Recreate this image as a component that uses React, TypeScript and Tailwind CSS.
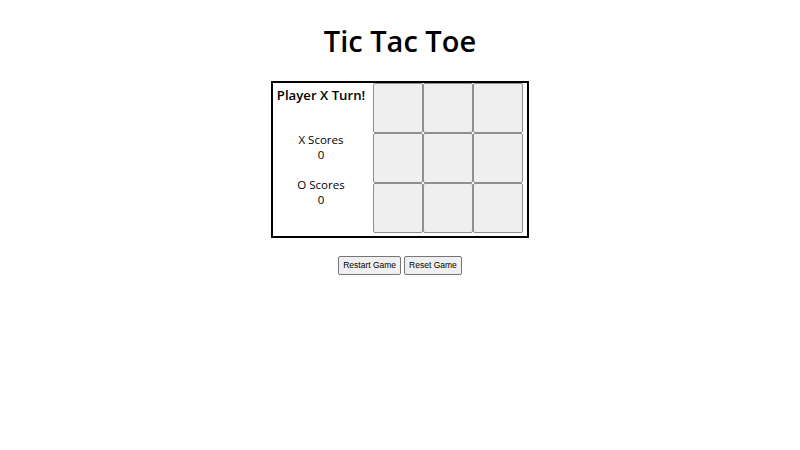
import React from "react";

export default function App() {
  const cells = Array.from({ length: 9 });
  return (
    <div className="flex flex-col items-center bg-white min-h-[450px] text-black" style={{ fontFamily: '"Open Sans", sans-serif' }}>
      <h1 className="mt-[21px] text-[29px] leading-[40px] font-semibold">Tic Tac Toe</h1>
      <div className="mt-[20px] flex border-2 border-black pr-[4px] pb-[3px]">
        <div className="w-[100px] pr-[4px] flex flex-col items-center">
          <div className="mt-[2px] text-[13.2px] leading-[20px] font-semibold whitespace-nowrap">Player X Turn!</div>
          <div className="mt-[27px] text-[11.5px] leading-[15px] text-center">
            <div>X Scores</div>
            <div>0</div>
          </div>
          <div className="mt-[15px] text-[11.5px] leading-[15px] text-center">
            <div>O Scores</div>
            <div>0</div>
          </div>
        </div>
        <div className="grid grid-cols-[50px_50px_50px] grid-rows-[50px_50px_50px]">
          {cells.map((_, i) => (
            <button key={i} className="border border-[#8f8f8f] rounded-[2px] bg-[#efefef]" />
          ))}
        </div>
      </div>
      <div className="mt-[18px] flex gap-[3px]" style={{ fontFamily: '"Liberation Sans", Arial, sans-serif' }}>
        <button className="border border-[#767676] rounded-[2px] bg-[#efefef] px-[4px] py-[2px] text-[8.5px] leading-[13px]">Restart Game</button>
        <button className="border border-[#767676] rounded-[2px] bg-[#efefef] px-[4px] py-[2px] text-[8.5px] leading-[13px]">Reset Game</button>
      </div>
    </div>
  );
}
